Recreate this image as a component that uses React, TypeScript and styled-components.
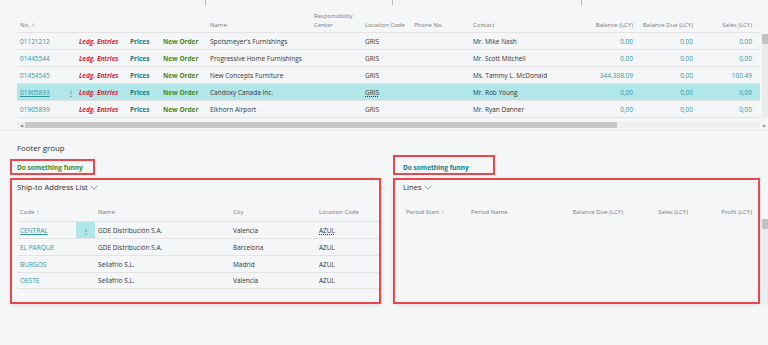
import React from "react";
import styled, { createGlobalStyle, css } from "styled-components";

const GlobalStyle = createGlobalStyle`
  html, body {
    margin: 0;
    padding: 0;
    background: #f5f6f8;
    font-family: "Open Sans", "Noto Sans", sans-serif;
    color: #323130;
  }
  * { box-sizing: border-box; }
`;

const Page = styled.div`
  width: 768px;
  height: 345px;
  overflow: hidden;
  display: flex;
  flex-direction: column;
`;

/* ---------- top part: customer list ---------- */

const TickStrip = styled.div`
  display: flex;
  height: 8px;
`;

const Tick = styled.span<{ $left: number }>`
  width: 1px;
  height: 5px;
  background: #b9b9b9;
  margin-left: ${(p) => p.$left}px;
`;

const ListArea = styled.div`
  display: flex;
`;

const ListBody = styled.div`
  width: 760px;
  padding-left: 17px;
`;

const VScroll = styled.div<{ $top: number }>`
  width: 6px;
  margin-left: 2px;
  padding-top: ${(p) => p.$top}px;
  background: linear-gradient(#f5f6f8 ${(p) => p.$top}px, #ececec ${(p) => p.$top}px);
`;

const VThumb = styled.div`
  height: 10px;
  background: #c2c2c2;
`;

const topCols = "49px 10px 51px 33px 47px 104px 51px 49px 59px 108px 58px 60px 64px";

const HeadRow = styled.div<{ $cols: string }>`
  display: grid;
  grid-template-columns: ${(p) => p.$cols};
  height: 25px;
  align-items: end;
  padding-bottom: 2px;
  border-bottom: 1px solid #e3e3e3;
`;

const HeadCell = styled.div<{ $right?: boolean; $pr?: number }>`
  font-size: 6px;
  line-height: 9px;
  color: #7a7a7a;
  padding: 0 ${(p) => p.$pr ?? 3}px 0 3px;
  white-space: nowrap;
  text-align: ${(p) => (p.$right ? "right" : "left")};
`;

const Row = styled.div<{ $cols: string; $active?: boolean }>`
  display: grid;
  grid-template-columns: ${(p) => p.$cols};
  height: 17px;
  align-items: center;
  border-bottom: 1px solid #e3e3e3;
  background: ${(p) => (p.$active ? "#b2e7ea" : "transparent")};
`;

const Cell = styled.div<{
  $right?: boolean;
  $tone?: "link" | "red" | "teal" | "green" | "text";
  $under?: "solid" | "dotted";
  $pr?: number;
}>`
  font-size: 6.5px;
  padding: 0 ${(p) => p.$pr ?? 3}px 0 3px;
  white-space: nowrap;
  overflow: hidden;
  text-align: ${(p) => (p.$right ? "right" : "left")};
  color: #333;
  ${(p) =>
    p.$tone === "link" &&
    css`
      color: #2f9aa2;
    `}
  ${(p) =>
    p.$tone === "red" &&
    css`
      color: #d8243a;
      font-weight: 700;
      font-style: italic;
    `}
  ${(p) =>
    p.$tone === "teal" &&
    css`
      color: #0f7f88;
      font-weight: 700;
    `}
  ${(p) =>
    p.$tone === "green" &&
    css`
      color: #3f8a26;
      font-weight: 700;
    `}
  span {
    ${(p) =>
      p.$under &&
      css`
        text-decoration: underline ${p.$under};
        text-underline-offset: 1px;
      `}
  }
`;

const DotsCell = styled.div<{ $fill?: boolean }>`
  height: 100%;
  display: flex;
  align-items: center;
  justify-content: center;
  font-size: 8px;
  color: #555;
  background: ${(p) => (p.$fill ? "#b2e7ea" : "transparent")};
`;

const HScroll = styled.div`
  display: flex;
  align-items: center;
  height: 6px;
  margin-top: 4px;
  padding-left: 17px;
`;

const HTrack = styled.div`
  display: flex;
  align-items: center;
  width: 743px;
  height: 6px;
  background: #efefef;
`;

const Arrow = styled.span`
  font-size: 4px;
  color: #8a8a8a;
  width: 8px;
  text-align: center;
`;

const HThumb = styled.div`
  width: 592px;
  height: 6px;
  background: #c8c8c8;
`;

const Separator = styled.div`
  height: 1px;
  margin-top: 2px;
  background: #ebebeb;
`;

/* ---------- footer group ---------- */

const FooterArea = styled.div`
  display: flex;
`;

const Footer = styled.div`
  display: grid;
  width: 760px;
  grid-template-columns: 371px 367px;
  grid-template-rows: 44px 126px;
  column-gap: 12px;
  row-gap: 3px;
  padding-left: 10px;
`;

const FooterHead = styled.div`
  display: flex;
  flex-direction: column;
  justify-content: flex-end;
`;

const GroupTitle = styled.div`
  font-size: 7.8px;
  color: #323130;
  padding-left: 7px;
  margin-bottom: 6px;
`;

const ActionBox = styled.div<{ $w: number; $h: number; $color: string; $pl: number }>`
  width: ${(p) => p.$w}px;
  height: ${(p) => p.$h}px;
  border: 2px solid #e8474b;
  display: flex;
  align-items: flex-end;
  padding: 0 0 1px ${(p) => p.$pl}px;
  font-size: 6.5px;
  font-weight: 700;
  color: ${(p) => p.$color};
  white-space: nowrap;
`;

const Panel = styled.div<{ $pl: number }>`
  border: 2px solid #e8474b;
  box-shadow: 0 1px 3px rgba(0, 0, 0, 0.12);
  padding-left: ${(p) => p.$pl}px;
  display: flex;
  flex-direction: column;
  min-width: 0;
`;

const PanelTitle = styled.div`
  display: flex;
  align-items: center;
  gap: 2px;
  height: 14px;
  font-size: 7.7px;
  color: #323130;
  svg {
    margin-top: 1px;
  }
`;

const PanelHead = styled(HeadRow)`
  height: 27px;
  padding-bottom: 4px;
  border-bottom: none;
`;

const PanelRow = styled(Row)`
  border-top: 1px solid #e3e3e3;
  border-bottom: none;
  &:last-child {
    border-bottom: 1px solid #e3e3e3;
  }
`;

const Chevron = () => (
  <svg width="8" height="5" viewBox="0 0 8 5">
    <path d="M0.5 0.8 L4 4.2 L7.5 0.8" fill="none" stroke="#777" strokeWidth="0.8" />
  </svg>
);

const Sort = styled.span`
  margin-left: 2px;
  font-size: 6px;
`;

type Customer = {
  no: string;
  name: string;
  contact: string;
  bal: string;
  due: string;
  sales: string;
};

const customers: Customer[] = [
  { no: "01121212", name: "Spotsmeyer's Furnishings", contact: "Mr. Mike Nash", bal: "0.00", due: "0.00", sales: "0.00" },
  { no: "01445544", name: "Progressive Home Furnishings", contact: "Mr. Scott Mitchell", bal: "0.00", due: "0.00", sales: "0.00" },
  { no: "01454545", name: "New Concepts Furniture", contact: "Ms. Tammy L. McDonald", bal: "344.308.09", due: "0.00", sales: "100.49" },
  { no: "01905893", name: "Candoxy Canada Inc.", contact: "Mr. Rob Young", bal: "0,00", due: "0,00", sales: "0,00" },
  { no: "01905899", name: "Elkhorn Airport", contact: "Mr. Ryan Danner", bal: "0,00", due: "0,00", sales: "0,00" },
];

const shipTo = [
  { code: "CENTRAL", name: "GDE Distribución S.A.", city: "Valencia" },
  { code: "EL PARQUE", name: "GDE Distribución S.A.", city: "Barcelona" },
  { code: "BURGOS", name: "Sellafrio S.L.", city: "Madrid" },
  { code: "OESTE", name: "Sellafrio S.L.", city: "Valencia" },
];

const shipCols = "59px 19px 135px 86px 63px";
const lineCols = "65px 100px 58px 65px 67px";

export default function App() {
  return (
    <Page>
      <GlobalStyle />
      <TickStrip>
        <Tick $left={205} />
        <Tick $left={186} />
        <Tick $left={188} />
      </TickStrip>

      <ListArea>
        <ListBody>
          <HeadRow $cols={topCols}>
            <HeadCell>
              No.<Sort>↑</Sort>
            </HeadCell>
            <HeadCell />
            <HeadCell />
            <HeadCell />
            <HeadCell />
            <HeadCell>Name</HeadCell>
            <HeadCell>
              Responsibility
              <br />
              Center
            </HeadCell>
            <HeadCell>Location Code</HeadCell>
            <HeadCell>Phone No.</HeadCell>
            <HeadCell>Contact</HeadCell>
            <HeadCell $right>Balance (LCY)</HeadCell>
            <HeadCell $right>Balance Due (LCY)</HeadCell>
            <HeadCell $right $pr={8}>
              Sales (LCY)
            </HeadCell>
          </HeadRow>
          {customers.map((c, i) => {
            const active = i === 3;
            return (
              <Row key={c.no} $cols={topCols} $active={active}>
                <Cell $tone="link" $under={active ? "solid" : undefined}>
                  <span>{c.no}</span>
                </Cell>
                <DotsCell>{active ? "⋮" : ""}</DotsCell>
                <Cell $tone="red">Ledg. Entries</Cell>
                <Cell $tone="teal">Prices</Cell>
                <Cell $tone="green">New Order</Cell>
                <Cell>{c.name}</Cell>
                <Cell />
                <Cell $under={active ? "dotted" : undefined}>
                  <span>GRIS</span>
                </Cell>
                <Cell />
                <Cell>{c.contact}</Cell>
                <Cell $right $tone="link">
                  {c.bal}
                </Cell>
                <Cell $right $tone="link">
                  {c.due}
                </Cell>
                <Cell $right $tone="link" $pr={8}>
                  {c.sales}
                </Cell>
              </Row>
            );
          })}
        </ListBody>
        <VScroll $top={26}>
          <VThumb />
        </VScroll>
      </ListArea>

      <HScroll>
        <HTrack>
          <Arrow>◀</Arrow>
          <HThumb />
        </HTrack>
        <Arrow>▶</Arrow>
      </HScroll>
      <Separator />

      <FooterArea>
        <Footer>
          <FooterHead>
            <GroupTitle>Footer group</GroupTitle>
            <ActionBox $w={85} $h={16} $pl={5} $color="#3f8a26">
              Do something funny
            </ActionBox>
          </FooterHead>
          <FooterHead>
            <ActionBox $w={102} $h={20} $pl={8} $color="#0f7f88">
              Do something funny
            </ActionBox>
          </FooterHead>

          <Panel $pl={5}>
            <PanelTitle>
              Ship-to Address List
              <Chevron />
            </PanelTitle>
            <PanelHead $cols={shipCols}>
              <HeadCell>
                Code<Sort>↑</Sort>
              </HeadCell>
              <HeadCell />
              <HeadCell>Name</HeadCell>
              <HeadCell>City</HeadCell>
              <HeadCell>Location Code</HeadCell>
            </PanelHead>
            <div>
              {shipTo.map((s, i) => (
                <PanelRow key={s.code} $cols={shipCols}>
                  <Cell $tone="link" $under={i === 0 ? "solid" : undefined}>
                    <span>{s.code}</span>
                  </Cell>
                  <DotsCell $fill={i === 0}>{i === 0 ? "⋮" : ""}</DotsCell>
                  <Cell>{s.name}</Cell>
                  <Cell>{s.city}</Cell>
                  <Cell $under={i === 0 ? "dotted" : undefined}>
                    <span>AZUL</span>
                  </Cell>
                </PanelRow>
              ))}
            </div>
          </Panel>

          <Panel $pl={8}>
            <PanelTitle>
              Lines
              <Chevron />
            </PanelTitle>
            <PanelHead $cols={lineCols}>
              <HeadCell>
                Period Start<Sort>↑</Sort>
              </HeadCell>
              <HeadCell>Period Name</HeadCell>
              <HeadCell $right>Balance Due (LCY)</HeadCell>
              <HeadCell $right>Sales (LCY)</HeadCell>
              <HeadCell $right $pr={6}>
                Profit (LCY)
              </HeadCell>
            </PanelHead>
          </Panel>
        </Footer>
        <VScroll $top={88}>
          <VThumb />
        </VScroll>
      </FooterArea>
    </Page>
  );
}
